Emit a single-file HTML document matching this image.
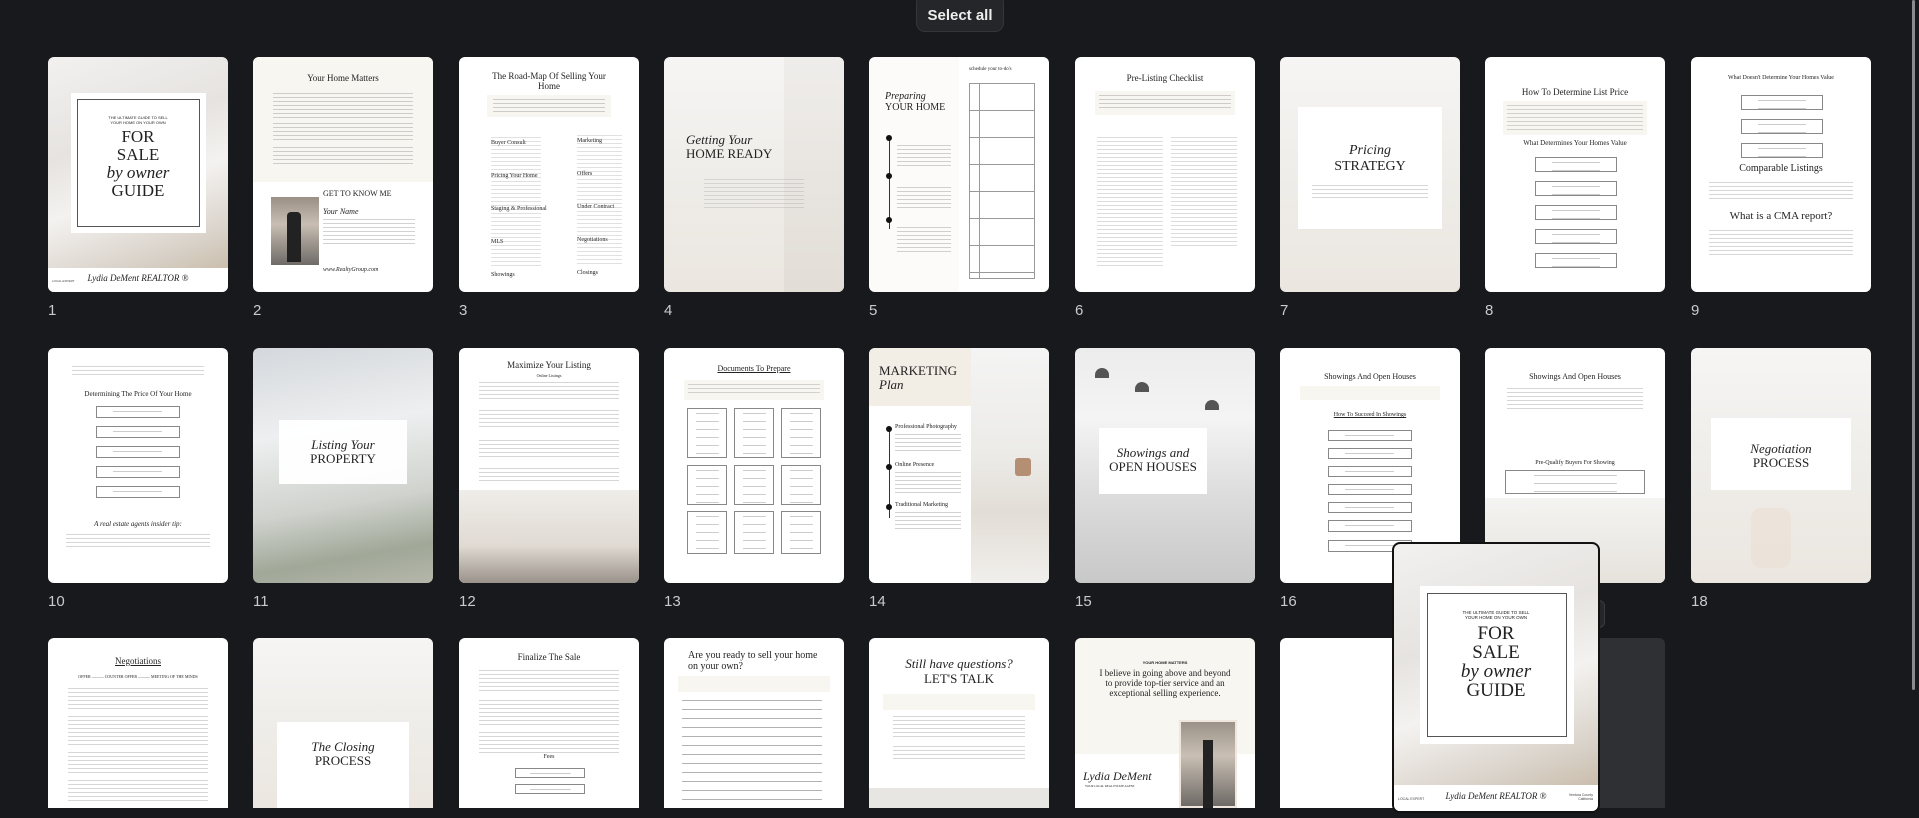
<!DOCTYPE html>
<html><head><meta charset="utf-8"><style>
*{box-sizing:border-box;margin:0;padding:0}
body{width:1919px;height:818px;background:#18191c;position:relative;overflow:hidden;font-family:"Liberation Sans",sans-serif}
.c{position:absolute;width:180px;height:235px;background:#fff;border-radius:6px;overflow:hidden}
.n{position:absolute;color:#c9cacd;font-size:15px}
.s{font-family:"Liberation Serif",serif;color:#222;text-align:center;position:absolute;left:0;right:0}
.ln{position:absolute;background:repeating-linear-gradient(to bottom,#9a9a9a 0 1px,transparent 1px 4px);opacity:.45}
.bx{position:absolute;border:1px solid #888;background:repeating-linear-gradient(to bottom,transparent 0 4px,#ccc 4px 5px,transparent 5px 8px);background-size:60% 100%;background-repeat:no-repeat;background-position:center}
.beige{background:#f8f6f1}
.wb{position:absolute;background:#fff}
.img1{background:linear-gradient(160deg,#f2f1f0 0%,#e6e3e0 35%,#f4f2f0 55%,#d8d1c8 80%,#c2b29a 100%)}
.img2{background:linear-gradient(180deg,#f6f5f4,#efede9 50%,#ebe6e0)}
.img3{background:linear-gradient(170deg,#d4d8dc 0%,#eeeff0 35%,#cfd2cd 65%,#a0a898 85%,#b5b6aa)}
.img4{background:linear-gradient(180deg,#ececec 0%,#f4f4f4 30%,#dedede 60%,#c8c8c8 100%)}
.dot{position:absolute;width:6px;height:6px;border-radius:3px;background:#111}
</style></head><body>

<div style="position:absolute;left:916px;top:-6px;width:88px;height:38px;background:#25262a;border:1px solid #34353a;border-radius:9px;color:#eee;font-size:15px;font-weight:bold;text-align:center;line-height:42px">Select all</div>

<!-- ROW 1 -->
<div class="c img1" style="left:48px;top:57px">
 <div class="wb" style="left:23px;top:36px;width:135px;height:140px"></div>
 <div style="position:absolute;left:29px;top:42px;width:123px;height:128px;border:1px solid #555"></div>
 <div class="s" style="top:58px;font-size:4px;font-family:'Liberation Sans'">THE ULTIMATE GUIDE TO SELL<br>YOUR HOME ON YOUR OWN</div>
 <div class="s" style="top:71px;font-size:17px;line-height:18px">FOR<br>SALE<br><i>by owner</i><br>GUIDE</div>
 <div class="wb" style="left:0;top:211px;width:180px;height:24px"></div>
 <div class="s" style="top:216px;font-size:9px"><i>Lydia DeMent REALTOR ®</i></div>
 <div style="position:absolute;left:4px;top:222px;font-size:3px;color:#444">LOCAL EXPERT</div>
</div>
<div class="n" style="left:48px;top:302px">1</div>

<div class="c" style="left:253px;top:57px">
 <div class="beige" style="position:absolute;left:0;top:0;width:180px;height:125px"></div>
 <div class="s" style="top:16px;font-size:9px">Your Home Matters</div>
 <div class="ln" style="left:20px;top:36px;width:140px;height:26px"></div>
 <div class="ln" style="left:20px;top:66px;width:140px;height:20px"></div>
 <div class="ln" style="left:20px;top:90px;width:140px;height:20px"></div>
 <div style="position:absolute;left:18px;top:140px;width:48px;height:68px;background:linear-gradient(#9a8f84,#c8beb3 40%,#6e6a66)"></div>
 <div style="position:absolute;left:34px;top:155px;width:14px;height:50px;background:#222;border-radius:4px 4px 0 0"></div>
 <div class="s" style="left:70px;text-align:left;top:132px;font-size:8px">GET TO KNOW ME</div>
 <div class="s" style="left:70px;text-align:left;top:150px;font-size:8px"><i>Your Name</i></div>
 <div class="ln" style="left:70px;top:162px;width:92px;height:28px"></div>
 <div class="s" style="left:70px;text-align:left;top:210px;font-size:6px"><i>www.RealtyGroup.com</i></div>
</div>
<div class="n" style="left:253px;top:302px">2</div>

<div class="c" style="left:459px;top:57px">
 <div class="s" style="top:14px;font-size:9px;line-height:10px">The Road-Map Of Selling Your<br>Home</div>
 <div class="beige" style="position:absolute;left:28px;top:38px;width:124px;height:22px"></div>
 <div class="ln" style="left:34px;top:42px;width:112px;height:14px"></div>
 <div class="s" style="left:32px;text-align:left;top:70px;font-size:6px;line-height:33px">Buyer Consult<br>Pricing Your Home<br>Staging &amp; Professional<br>MLS<br>Showings</div>
 <div class="s" style="left:118px;text-align:left;top:68px;font-size:6px;line-height:33px">Marketing<br>Offers<br>Under Contract<br>Negotiations<br>Closings</div>
 <div class="ln" style="left:32px;top:80px;width:50px;height:130px;opacity:.3"></div>
 <div class="ln" style="left:118px;top:78px;width:45px;height:130px;opacity:.3"></div>
</div>
<div class="n" style="left:459px;top:302px">3</div>

<div class="c img2" style="left:664px;top:57px">
 <div style="position:absolute;right:0;top:0;width:60px;height:235px;background:linear-gradient(#efedeb,#e2ddd6)"></div>
 <div class="s" style="right:auto;text-align:left;top:76px;font-size:13px;line-height:14px;left:22px"><i>Getting Your</i><br>HOME READY</div>
 <div class="ln" style="left:40px;top:122px;width:100px;height:30px;opacity:.3"></div>
</div>
<div class="n" style="left:664px;top:302px">4</div>

<div class="c" style="left:869px;top:57px">
 <div class="beige" style="position:absolute;left:0;top:0;width:90px;height:235px;opacity:.4"></div>
 <div class="s" style="left:16px;text-align:left;top:34px;font-size:10px;line-height:11px"><i>Preparing</i><br>YOUR HOME</div>
 <div style="position:absolute;left:20px;top:80px;width:1px;height:92px;background:#333"></div>
 <div class="dot" style="left:17px;top:78px"></div><div class="dot" style="left:17px;top:116px"></div><div class="dot" style="left:17px;top:160px"></div>
 <div class="ln" style="left:28px;top:88px;width:54px;height:22px"></div>
 <div class="ln" style="left:28px;top:130px;width:54px;height:22px"></div>
 <div class="ln" style="left:28px;top:170px;width:54px;height:28px"></div>
 <div class="s" style="left:100px;text-align:left;top:10px;font-size:5px">schedule your to-do's</div>
 <div style="position:absolute;left:100px;top:26px;width:66px;height:196px;border:1px solid #999;background:repeating-linear-gradient(transparent 0 26px,#999 26px 27px)"></div>
 <div style="position:absolute;left:110px;top:26px;width:1px;height:196px;background:#999"></div>
</div>
<div class="n" style="left:869px;top:302px">5</div>

<div class="c" style="left:1075px;top:57px">
 <div class="s" style="top:16px;font-size:9px">Pre-Listing Checklist</div>
 <div class="beige" style="position:absolute;left:20px;top:34px;width:140px;height:24px"></div>
 <div class="ln" style="left:24px;top:38px;width:132px;height:16px"></div>
 <div class="ln" style="left:22px;top:80px;width:66px;height:130px;opacity:.35"></div>
 <div class="ln" style="left:96px;top:80px;width:66px;height:110px;opacity:.35"></div>
</div>
<div class="n" style="left:1075px;top:302px">6</div>

<div class="c img2" style="left:1280px;top:57px">
 <div class="wb" style="left:18px;top:50px;width:144px;height:122px"></div>
 <div class="s" style="top:86px;font-size:14px;line-height:16px"><i>Pricing</i><br>STRATEGY</div>
 <div class="ln" style="left:32px;top:128px;width:116px;height:16px;opacity:.4"></div>
</div>
<div class="n" style="left:1280px;top:302px">7</div>

<div class="c" style="left:1485px;top:57px">
 <div class="s" style="top:30px;font-size:9px">How To Determine List Price</div>
 <div class="beige" style="position:absolute;left:18px;top:44px;width:144px;height:34px"></div>
 <div class="ln" style="left:22px;top:48px;width:136px;height:28px;opacity:.4"></div>
 <div class="s" style="top:82px;font-size:7px">What Determines Your Homes Value</div>
 <div class="bx" style="left:50px;top:100px;width:82px;height:15px"></div>
 <div class="bx" style="left:50px;top:124px;width:82px;height:15px"></div>
 <div class="bx" style="left:50px;top:148px;width:82px;height:15px"></div>
 <div class="bx" style="left:50px;top:172px;width:82px;height:15px"></div>
 <div class="bx" style="left:50px;top:196px;width:82px;height:15px"></div>
</div>
<div class="n" style="left:1485px;top:302px">8</div>

<div class="c" style="left:1691px;top:57px">
 <div class="s" style="top:18px;font-size:6px">What Doesn't Determine Your Homes Value</div>
 <div class="bx" style="left:50px;top:38px;width:82px;height:15px"></div>
 <div class="bx" style="left:50px;top:62px;width:82px;height:15px"></div>
 <div class="bx" style="left:50px;top:86px;width:82px;height:15px"></div>
 <div class="s" style="top:106px;font-size:10px">Comparable Listings</div>
 <div class="ln" style="left:18px;top:125px;width:144px;height:20px;opacity:.4"></div>
 <div class="s" style="top:153px;font-size:11px">What is a CMA report?</div>
 <div class="ln" style="left:18px;top:173px;width:144px;height:28px;opacity:.4"></div>
</div>
<div class="n" style="left:1691px;top:302px">9</div>

<!-- ROW 2 -->
<div class="c" style="left:48px;top:348px">
 <div class="ln" style="left:24px;top:18px;width:132px;height:12px;opacity:.4"></div>
 <div class="s" style="top:42px;font-size:7px">Determining The Price Of Your Home</div>
 <div class="bx" style="left:48px;top:58px;width:84px;height:12px"></div>
 <div class="bx" style="left:48px;top:78px;width:84px;height:12px"></div>
 <div class="bx" style="left:48px;top:98px;width:84px;height:12px"></div>
 <div class="bx" style="left:48px;top:118px;width:84px;height:12px"></div>
 <div class="bx" style="left:48px;top:138px;width:84px;height:12px"></div>
 <div class="s" style="top:172px;font-size:7px"><i>A real estate agents insider tip:</i></div>
 <div class="ln" style="left:18px;top:186px;width:144px;height:16px;opacity:.4"></div>
</div>
<div class="n" style="left:48px;top:593px">10</div>

<div class="c img3" style="left:253px;top:348px">
 <div class="wb" style="left:26px;top:72px;width:128px;height:64px;opacity:.95"></div>
 <div class="s" style="top:90px;font-size:13px;line-height:14px"><i>Listing Your</i><br>PROPERTY</div>
</div>
<div class="n" style="left:253px;top:593px">11</div>

<div class="c" style="left:459px;top:348px">
 <div class="s" style="top:12px;font-size:9px">Maximize Your Listing</div>
 <div class="s" style="top:25px;font-size:4px">Online Listings</div>
 <div class="ln" style="left:20px;top:34px;width:140px;height:20px;opacity:.4"></div>
 <div class="ln" style="left:20px;top:62px;width:140px;height:20px;opacity:.4"></div>
 <div class="ln" style="left:20px;top:92px;width:140px;height:20px;opacity:.4"></div>
 <div class="ln" style="left:20px;top:120px;width:140px;height:16px;opacity:.4"></div>
 <div style="position:absolute;left:0;top:142px;width:180px;height:93px;background:linear-gradient(180deg,#efede9,#e0dad3 60%,#9a928a)"></div>
</div>
<div class="n" style="left:459px;top:593px">12</div>

<div class="c" style="left:664px;top:348px">
 <div class="s" style="top:16px;font-size:8px;text-decoration:underline">Documents To Prepare</div>
 <div class="beige" style="position:absolute;left:20px;top:32px;width:140px;height:20px"></div>
 <div class="ln" style="left:24px;top:36px;width:132px;height:12px;opacity:.4"></div>
 <div class="bx" style="left:23px;top:60px;width:40px;height:50px"></div><div class="bx" style="left:70px;top:60px;width:40px;height:50px"></div><div class="bx" style="left:117px;top:60px;width:40px;height:50px"></div>
 <div class="bx" style="left:23px;top:117px;width:40px;height:40px"></div><div class="bx" style="left:70px;top:117px;width:40px;height:40px"></div><div class="bx" style="left:117px;top:117px;width:40px;height:40px"></div>
 <div class="bx" style="left:23px;top:163px;width:40px;height:43px"></div><div class="bx" style="left:70px;top:163px;width:40px;height:43px"></div><div class="bx" style="left:117px;top:163px;width:40px;height:43px"></div>
</div>
<div class="n" style="left:664px;top:593px">13</div>

<div class="c" style="left:869px;top:348px">
 <div style="position:absolute;left:0;top:0;width:102px;height:58px;background:#f2ede5"></div>
 <div style="position:absolute;left:102px;top:0;width:78px;height:235px;background:linear-gradient(180deg,#f4f4f4,#ecebe8 45%,#e2ddd6 70%,#f1efec)"></div>
 <div style="position:absolute;left:146px;top:110px;width:16px;height:18px;background:#b58f74;border-radius:3px"></div>
 <div class="s" style="left:10px;text-align:left;top:16px;font-size:13px;line-height:14px">MARKETING<br><i>Plan</i></div>
 <div style="position:absolute;left:20px;top:80px;width:1px;height:90px;background:#333"></div>
 <div class="dot" style="left:17px;top:78px"></div><div class="dot" style="left:17px;top:116px"></div><div class="dot" style="left:17px;top:156px"></div>
 <div class="s" style="left:26px;text-align:left;top:76px;font-size:6px">Professional Photography</div>
 <div class="ln" style="left:26px;top:86px;width:66px;height:20px"></div>
 <div class="s" style="left:26px;text-align:left;top:114px;font-size:6px">Online Presence</div>
 <div class="ln" style="left:26px;top:124px;width:66px;height:24px"></div>
 <div class="s" style="left:26px;text-align:left;top:154px;font-size:6px">Traditional Marketing</div>
 <div class="ln" style="left:26px;top:164px;width:66px;height:20px"></div>
</div>
<div class="n" style="left:869px;top:593px">14</div>

<div class="c img4" style="left:1075px;top:348px">
 <div style="position:absolute;left:20px;top:20px;width:14px;height:10px;background:#555;border-radius:7px 7px 0 0"></div>
 <div style="position:absolute;left:60px;top:34px;width:14px;height:10px;background:#555;border-radius:7px 7px 0 0"></div>
 <div style="position:absolute;left:130px;top:52px;width:14px;height:10px;background:#555;border-radius:7px 7px 0 0"></div>
 <div class="wb" style="left:24px;top:80px;width:108px;height:66px"></div>
 <div class="s" style="left:24px;right:48px;top:98px;font-size:13px;line-height:14px"><i>Showings and</i><br>OPEN HOUSES</div>
</div>
<div class="n" style="left:1075px;top:593px">15</div>

<div class="c" style="left:1280px;top:348px">
 <div class="s" style="top:24px;font-size:8px">Showings And Open Houses</div>
 <div class="beige" style="position:absolute;left:20px;top:38px;width:140px;height:14px"></div>
 <div class="s" style="top:64px;font-size:6px;text-decoration:underline">How To Succeed In Showings</div>
 <div class="bx" style="left:48px;top:82px;width:84px;height:11px"></div>
 <div class="bx" style="left:48px;top:100px;width:84px;height:11px"></div>
 <div class="bx" style="left:48px;top:118px;width:84px;height:11px"></div>
 <div class="bx" style="left:48px;top:136px;width:84px;height:11px"></div>
 <div class="bx" style="left:48px;top:154px;width:84px;height:11px"></div>
 <div class="bx" style="left:48px;top:172px;width:84px;height:12px"></div>
 <div class="bx" style="left:48px;top:192px;width:84px;height:12px"></div>
</div>
<div class="n" style="left:1280px;top:593px">16</div>

<div class="c" style="left:1485px;top:348px">
 <div class="s" style="top:24px;font-size:8px">Showings And Open Houses</div>
 <div class="ln" style="left:22px;top:40px;width:136px;height:24px;opacity:.4"></div>
 <div class="s" style="top:112px;font-size:6px">Pre-Qualify Buyers For Showing</div>
 <div class="bx" style="left:20px;top:122px;width:140px;height:24px"></div>
 <div style="position:absolute;left:0;top:150px;width:180px;height:85px;background:linear-gradient(#f4f4f2,#e6e2dc)"></div>
</div>
<div class="n" style="left:1485px;top:593px">17</div>

<div class="c img2" style="left:1691px;top:348px">
 <div class="wb" style="left:20px;top:70px;width:140px;height:72px"></div>
 <div class="s" style="top:94px;font-size:13px;line-height:14px"><i>Negotiation</i><br>PROCESS</div>
 <div style="position:absolute;left:60px;top:160px;width:40px;height:60px;background:#ebe1d6;border-radius:10px;opacity:.7"></div>
</div>
<div class="n" style="left:1691px;top:593px">18</div>

<!-- ROW 3 -->
<div class="c" style="left:48px;top:638px;height:170px;border-radius:6px 6px 0 0">
 <div class="s" style="top:18px;font-size:9px;text-decoration:underline">Negotiations</div>
 <div class="s" style="top:36px;font-size:4px">OFFER ——— COUNTER OFFER ——— MEETING OF THE MINDS</div>
 <div class="ln" style="left:20px;top:50px;width:140px;height:22px;opacity:.4"></div>
 <div class="ln" style="left:20px;top:78px;width:140px;height:30px;opacity:.4"></div>
 <div class="ln" style="left:20px;top:114px;width:140px;height:22px;opacity:.4"></div>
 <div class="ln" style="left:20px;top:142px;width:140px;height:24px;opacity:.4"></div>
</div>
<div class="c img2" style="left:253px;top:638px;height:170px;border-radius:6px 6px 0 0">
 <div class="wb" style="left:24px;top:84px;width:132px;height:86px"></div>
 <div class="s" style="top:102px;font-size:13px;line-height:14px"><i>The Closing</i><br>PROCESS</div>
</div>
<div class="c" style="left:459px;top:638px;height:170px;border-radius:6px 6px 0 0">
 <div class="s" style="top:14px;font-size:9px">Finalize The Sale</div>
 <div class="ln" style="left:20px;top:32px;width:140px;height:24px;opacity:.4"></div>
 <div class="ln" style="left:20px;top:62px;width:140px;height:26px;opacity:.4"></div>
 <div class="ln" style="left:20px;top:94px;width:140px;height:22px;opacity:.4"></div>
 <div class="s" style="top:116px;font-size:6px">Fees</div>
 <div class="bx" style="left:56px;top:130px;width:70px;height:10px"></div>
 <div class="bx" style="left:56px;top:146px;width:70px;height:10px"></div>
</div>
<div class="c" style="left:664px;top:638px;height:170px;border-radius:6px 6px 0 0">
 <div class="s" style="left:24px;text-align:left;top:12px;font-size:10px;line-height:11px">Are you ready to sell your home<br>on your own?</div>
 <div class="beige" style="position:absolute;left:14px;top:38px;width:152px;height:16px"></div>
 <div class="ln" style="left:18px;top:62px;width:140px;height:106px;opacity:.45;background:repeating-linear-gradient(to bottom,#555 0 1px,transparent 1px 9px)"></div>
</div>
<div class="c" style="left:869px;top:638px;height:170px;border-radius:6px 6px 0 0">
 <div class="s" style="top:18px;font-size:13px;line-height:15px"><i>Still have questions?</i><br>LET'S TALK</div>
 <div class="beige" style="position:absolute;left:14px;top:56px;width:152px;height:16px"></div>
 <div class="ln" style="left:24px;top:78px;width:132px;height:22px;opacity:.4"></div>
 <div class="ln" style="left:24px;top:108px;width:132px;height:16px;opacity:.4"></div>
 <div style="position:absolute;left:0;top:150px;width:180px;height:20px;background:#e8e6e2"></div>
</div>
<div class="c beige" style="left:1075px;top:638px;height:170px;border-radius:6px 6px 0 0">
 <div class="s" style="top:22px;font-size:4px;font-weight:bold;font-family:'Liberation Sans'">YOUR HOME MATTERS</div>
 <div class="s" style="top:30px;font-size:9px;line-height:10px">I believe in going above and beyond<br>to provide top-tier service and an<br>exceptional selling experience.</div>
 <div class="wb" style="left:0;top:116px;width:180px;height:54px"></div>
 <div style="position:absolute;left:104px;top:82px;width:58px;height:88px;background:linear-gradient(#9a9288,#c9bfb4 40%,#6e6a66);border:2px solid #efe7dd"></div>
 <div style="position:absolute;left:128px;top:102px;width:10px;height:68px;background:#222"></div>
 <div class="s" style="left:8px;text-align:left;top:131px;font-size:12px"><i>Lydia DeMent</i></div>
 <div class="s" style="left:10px;text-align:left;top:146px;font-size:3px">YOUR LOCAL REAL ESTATE AGENT</div>
</div>
<div class="c" style="left:1280px;top:638px;height:170px;border-radius:6px 6px 0 0"></div>
<div style="position:absolute;left:1485px;top:638px;width:180px;height:170px;background:#2f3033;border-radius:6px 6px 0 0"></div>

<div style="position:absolute;left:1585px;top:600px;width:20px;height:28px;background:#25262a;border:1px solid #3a3b40;border-radius:6px"></div>

<!-- dragged card -->
<div style="position:absolute;left:1392px;top:542px;width:208px;height:271px;background:#111;border-radius:8px;padding:2px">
<div class="img1" style="position:relative;width:204px;height:267px;border-radius:6px;overflow:hidden">
 <div class="wb" style="left:26px;top:42px;width:154px;height:158px"></div>
 <div style="position:absolute;left:33px;top:49px;width:140px;height:144px;border:1px solid #555"></div>
 <div class="s" style="top:66px;font-size:4.5px;font-family:'Liberation Sans'">THE ULTIMATE GUIDE TO SELL<br>YOUR HOME ON YOUR OWN</div>
 <div class="s" style="top:80px;font-size:19px;line-height:19px">FOR<br>SALE<br><i>by owner</i><br>GUIDE</div>
 <div class="wb" style="left:0;top:241px;width:204px;height:26px"></div>
 <div class="s" style="top:247px;font-size:9px"><i>Lydia DeMent REALTOR ®</i></div>
 <div style="position:absolute;left:4px;top:253px;font-size:3.5px;color:#444">LOCAL EXPERT</div>
 <div style="position:absolute;right:5px;top:249px;font-size:3.5px;color:#444;text-align:right">Ventura County<br>California</div>
</div></div>

<div style="position:absolute;left:1912px;top:0;width:3px;height:690px;background:#8a8b8f;border-radius:2px"></div>
</body></html>
